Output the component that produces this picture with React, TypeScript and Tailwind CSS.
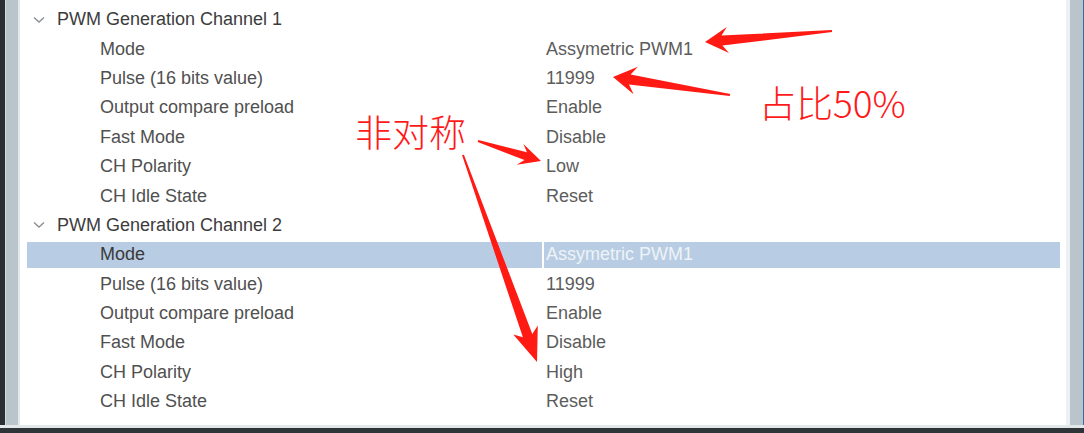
import React from "react";

type Pt = [number, number];

// tapered annotation arrow, thin at the tail and a swept-back head at the tip
function arrowPoints(tail: Pt, tip: Pt, headLen: number, headHalf: number, shaftHalf: number, tailHalf: number) {
  const dx = tip[0] - tail[0];
  const dy = tip[1] - tail[1];
  const len = Math.hypot(dx, dy);
  const ux = dx / len;
  const uy = dy / len;
  const nx = -uy;
  const ny = ux;
  const join: Pt = [tip[0] - ux * (headLen - 6), tip[1] - uy * (headLen - 6)];
  const barb: Pt = [tip[0] - ux * headLen, tip[1] - uy * headLen];
  const pts: Pt[] = [
    [tail[0] + nx * tailHalf, tail[1] + ny * tailHalf],
    [join[0] + nx * shaftHalf, join[1] + ny * shaftHalf],
    [barb[0] + nx * headHalf, barb[1] + ny * headHalf],
    tip,
    [barb[0] - nx * headHalf, barb[1] - ny * headHalf],
    [join[0] - nx * shaftHalf, join[1] - ny * shaftHalf],
    [tail[0] - nx * tailHalf, tail[1] - ny * tailHalf],
  ];
  return pts.map((p) => `${p[0].toFixed(1)},${p[1].toFixed(1)}`).join(" ");
}

const arrows = [
  arrowPoints([832, 31], [705, 42], 23, 13, 5, 1),
  arrowPoints([730, 95], [613, 77], 23, 14, 5, 1),
  arrowPoints([478, 141], [541, 161], 22, 11, 4, 1),
  arrowPoints([463, 155], [537, 362], 34, 13, 5, 1),
];

interface Prop {
  label: string;
  value: string;
  selected?: boolean;
}

const channels: { title: string; props: Prop[] }[] = [
  {
    title: "PWM Generation Channel 1",
    props: [
      { label: "Mode", value: "Assymetric PWM1" },
      { label: "Pulse (16 bits value)", value: "11999" },
      { label: "Output compare preload", value: "Enable" },
      { label: "Fast Mode", value: "Disable" },
      { label: "CH Polarity", value: "Low" },
      { label: "CH Idle State", value: "Reset" },
    ],
  },
  {
    title: "PWM Generation Channel 2",
    props: [
      { label: "Mode", value: "Assymetric PWM1", selected: true },
      { label: "Pulse (16 bits value)", value: "11999" },
      { label: "Output compare preload", value: "Enable" },
      { label: "Fast Mode", value: "Disable" },
      { label: "CH Polarity", value: "High" },
      { label: "CH Idle State", value: "Reset" },
    ],
  },
];

function Chevron() {
  return (
    <svg width="12" height="8" viewBox="0 0 12 8" className="shrink-0">
      <polyline points="1,1.5 6,6 11,1.5" fill="none" stroke="#8a8f94" strokeWidth="1.4" />
    </svg>
  );
}

function PropRow({ prop }: { prop: Prop }) {
  return (
    <div className="h-[29.4px] flex items-center">
      <div className={`h-[26px] w-[515px] flex items-center pl-[73px] ${prop.selected ? "bg-[#b8cde3] text-[#3a3a3a]" : "text-[#505050]"}`}>
        {prop.label}
      </div>
      <div className="w-[2px]" />
      <div className={`h-[26px] flex-1 flex items-center pl-[2px] ${prop.selected ? "bg-[#b8cde3] text-[#eef3f8]" : "text-[#5c5c5c]"}`}>
        {prop.value}
      </div>
    </div>
  );
}

export default function App() {
  return (
    <div className="relative w-[1084px] h-[433px] bg-[#2f3438] flex flex-col overflow-hidden font-['Liberation_Sans',Arial,sans-serif] text-[18px]">
      <div className="h-[425px] flex">
        {/* left frame */}
        <div className="w-[5px] bg-[#2b3034]" />
        <div className="w-[1px] bg-[#d5dce1]" />
        <div className="w-[12px] bg-[#b9c4cb]" />
        <div className="w-[2px] bg-[#e3e8eb]" />

        {/* property tree */}
        <div className="flex-1 bg-white pt-[5px] pl-[7px] pr-[6px]">
          {channels.map((ch) => (
            <div key={ch.title}>
              <div className="h-[29.4px] flex items-center pl-[6px] gap-[12px] text-[#3c3c3c]">
                <Chevron />
                <span>{ch.title}</span>
              </div>
              {ch.props.map((p) => (
                <PropRow key={p.label} prop={p} />
              ))}
            </div>
          ))}
        </div>

        {/* right frame */}
        <div className="w-[4px] bg-[#eef1f3]" />
        <div className="w-[13px] bg-[#b9c4cb]" />
        <div className="w-[1px] bg-[#3a6e9a]" />
      </div>
      <div className="h-[3px] bg-[#e2e7ea]" />
      <div className="flex-1 bg-[#2f3438]" />

      {/* red annotations */}
      <svg className="absolute inset-0 pointer-events-none" width="1084" height="433" viewBox="0 0 1084 433">
        {arrows.map((pts, i) => (
          <polygon key={i} points={pts} fill="#ff1a14" />
        ))}
      </svg>
      <div className="absolute left-[759px] top-[84px] leading-none text-[37px] font-light text-[#ff1a1a] font-['Noto_Sans_CJK_SC','Noto_Sans',sans-serif] pointer-events-none">
        占比50%
      </div>
      <div className="absolute left-[355px] top-[113px] leading-none text-[37px] font-light text-[#ff1a1a] font-['Noto_Sans_CJK_SC',sans-serif] pointer-events-none">
        非对称
      </div>
    </div>
  );
}
